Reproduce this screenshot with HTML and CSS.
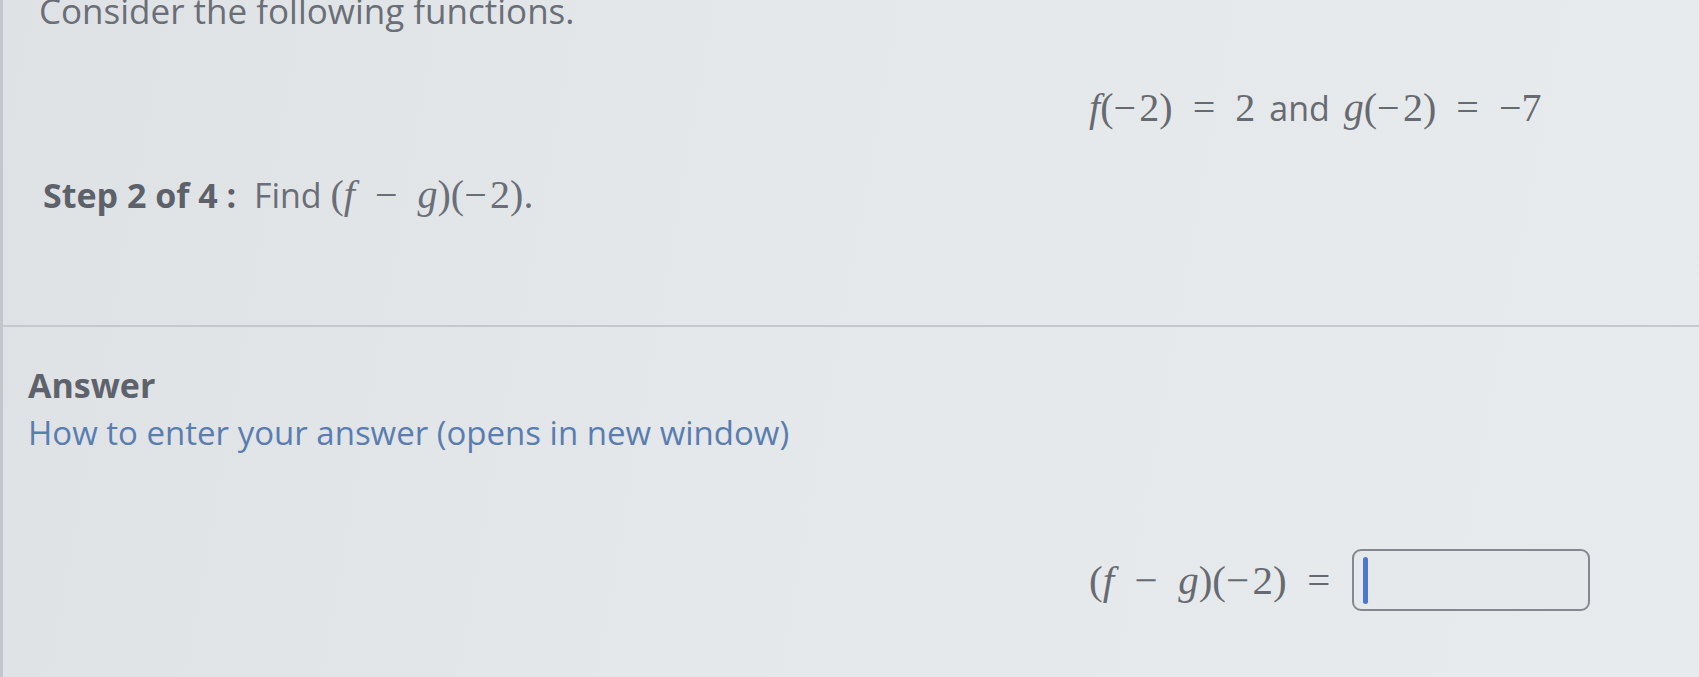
FILE: index.html
```html
<!DOCTYPE html>
<html>
<head>
<meta charset="utf-8">
<link rel="stylesheet" href="styles.css">
</head>
<body>
<div class="page">
  <section class="question">
    <p class="intro">Consider the following functions.</p>
    <div class="given">
      <span class="m"><i>f</i>(−&#8202;2) &nbsp;=&nbsp; 2</span>
      <span class="word">and</span>
      <span class="m"><i>g</i>(−&#8202;2) &nbsp;=&nbsp; −7</span>
    </div>
    <p class="step"><b>Step 2 of 4 :</b>&nbsp; Find <span class="m">(<i>f</i> &nbsp;−&nbsp; <i>g</i>)(−&#8202;2).</span></p>
  </section>
  <hr class="rule">
  <section class="answer">
    <h2 class="answer-title">Answer</h2>
    <a class="howto">How to enter your answer (opens in new window)</a>
    <div class="answer-row">
      <span class="m">(<i>f</i> &nbsp;−&nbsp; <i>g</i>)(−&#8202;2) &nbsp;=</span>
      <div class="input-box"><span class="caret"></span></div>
    </div>
  </section>
</div>
</body>
</html>
```
FILE: styles.css
```css
html, body {
  margin: 0;
  padding: 0;
  height: 100%;
}
body {
  background: linear-gradient(100deg, #dfe2e5 0%, #e5e8ea 45%, #e8ebed 100%);
  font-family: "Open Sans", "Liberation Sans", sans-serif;
  color: #686c74;
  overflow: hidden;
}
.page {
  height: 677px;
  border-left: 3px solid #c3c7cb;
  box-sizing: border-box;
}
.question {
  display: flex;
  flex-direction: column;
}
.intro {
  margin: -10px 0 0 36px;
  font-size: 35px;
  line-height: 42px;
  color: #6a6e77;
}
.m {
  font-family: "Liberation Serif", "DejaVu Serif", serif;
}
.m i {
  font-style: italic;
}
.given {
  margin: 52px 0 0 1086px;
  font-size: 40px;
  line-height: 48px;
  color: #676a70;
  display: flex;
  gap: 14px;
  align-items: baseline;
}
.given .word {
  font-family: "Open Sans", "Liberation Sans", sans-serif;
  font-size: 34px;
}
.step {
  margin: 40px 0 0 40px;
  font-size: 34px;
  line-height: 46px;
  color: #6a6e77;
}
.step b {
  color: #5d6169;
  font-weight: 700;
}
.step .m {
  font-size: 40px;
}
.rule {
  margin: 107px 0 0 0;
  border: none;
  height: 2px;
  background: #c5c9cd;
}
.answer {
  display: flex;
  flex-direction: column;
}
.answer-title {
  margin: 36px 0 0 25px;
  font-size: 34px;
  line-height: 44px;
  font-weight: 700;
  color: #5e626a;
}
.howto {
  margin: 5px 0 0 25px;
  font-size: 33px;
  line-height: 42px;
  color: #5a7db0;
}
.answer-row {
  margin: 95px 0 0 1086px;
  display: flex;
  align-items: center;
  gap: 22px;
  font-size: 41px;
  color: #676a70;
}
.input-box {
  width: 238px;
  height: 62px;
  border: 2px solid #85888e;
  border-radius: 9px;
  background: #e6e9eb;
  display: flex;
  align-items: center;
  padding-left: 9px;
  box-sizing: border-box;
}
.caret {
  width: 5px;
  height: 47px;
  border-radius: 3px;
  background: #4a78cf;
}
```
